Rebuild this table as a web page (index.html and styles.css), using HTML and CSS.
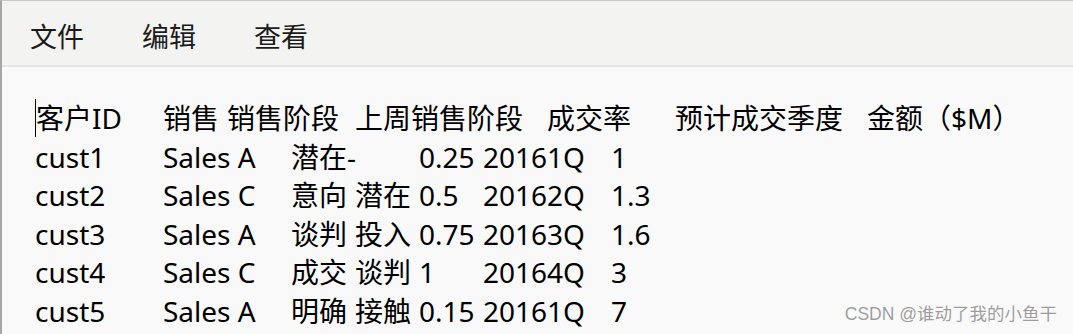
FILE: index.html
```html
<!DOCTYPE html>
<html lang="zh-CN">
<head>
<meta charset="utf-8">
<title>记事本</title>
<link rel="stylesheet" href="styles.css">
</head>
<body>
<div class="window">
  <nav class="menubar">
    <span class="menu-item">文件</span>
    <span class="menu-item">编辑</span>
    <span class="menu-item">查看</span>
  </nav>
  <main class="editor">
<pre class="text"><span class="caret"></span>客户ID	销售	销售阶段	上周销售阶段	成交率	预计成交季度	金额（$M）
cust1	Sales A	潜在-	0.25	20161Q	1
cust2	Sales C	意向	潜在	0.5	20162Q	1.3
cust3	Sales A	谈判	投入	0.75	20163Q	1.6
cust4	Sales C	成交	谈判	1	20164Q	3
cust5	Sales A	明确	接触	0.15	20161Q	7</pre>
    <div class="watermark">CSDN @谁动了我的小鱼干</div>
  </main>
</div>
</body>
</html>
```
FILE: styles.css
```css
html, body {
  margin: 0;
  padding: 0;
  width: 1073px;
  height: 334px;
  overflow: hidden;
  background: #f9f9f9;
}
.window {
  position: relative;
  height: 334px;
  border-left: 2px solid #a7a7a7;
  border-top: 1px solid #c9c9c9;
  box-sizing: border-box;
  font-family: "Noto Sans", "Noto Sans CJK SC", sans-serif;
  color: #000;
}
.menubar {
  display: flex;
  gap: 58px;
  height: 64px;
  align-items: center;
  padding-left: 28px;
  background: #f3f3f2;
  border-bottom: 2px solid #e4e4e4;
  box-sizing: content-box;
}
.menu-item {
  font-family: "Noto Sans CJK SC", sans-serif;
  font-size: 27px;
  color: #1b1b1b;
  line-height: 1;
  width: 54px;
  padding-top: 4px;
}
.editor {
  position: relative;
  height: 267px;
  background: #f9f9f9;
}
.text {
  width: max-content;
  margin: 0;
  padding: 32px 0 0 33px;
  font-family: "Noto Sans", "Noto Sans CJK SC", sans-serif;
  font-size: 28px;
  line-height: 38.6px;
  tab-size: 64px;
  -moz-tab-size: 64px;
  white-space: pre;
  color: #000;
}
.caret {
  display: inline-block;
  width: 1px;
  height: 38px;
  background: #000;
  vertical-align: top;
}
.watermark {
  position: absolute;
  right: 16px;
  bottom: 9px;
  font-family: "Liberation Sans", "Noto Sans CJK SC", sans-serif;
  font-size: 17.5px;
  color: #9d9d9d;
  text-shadow: 0 0 2px #fff, 0 0 1px #fff;
}
```
